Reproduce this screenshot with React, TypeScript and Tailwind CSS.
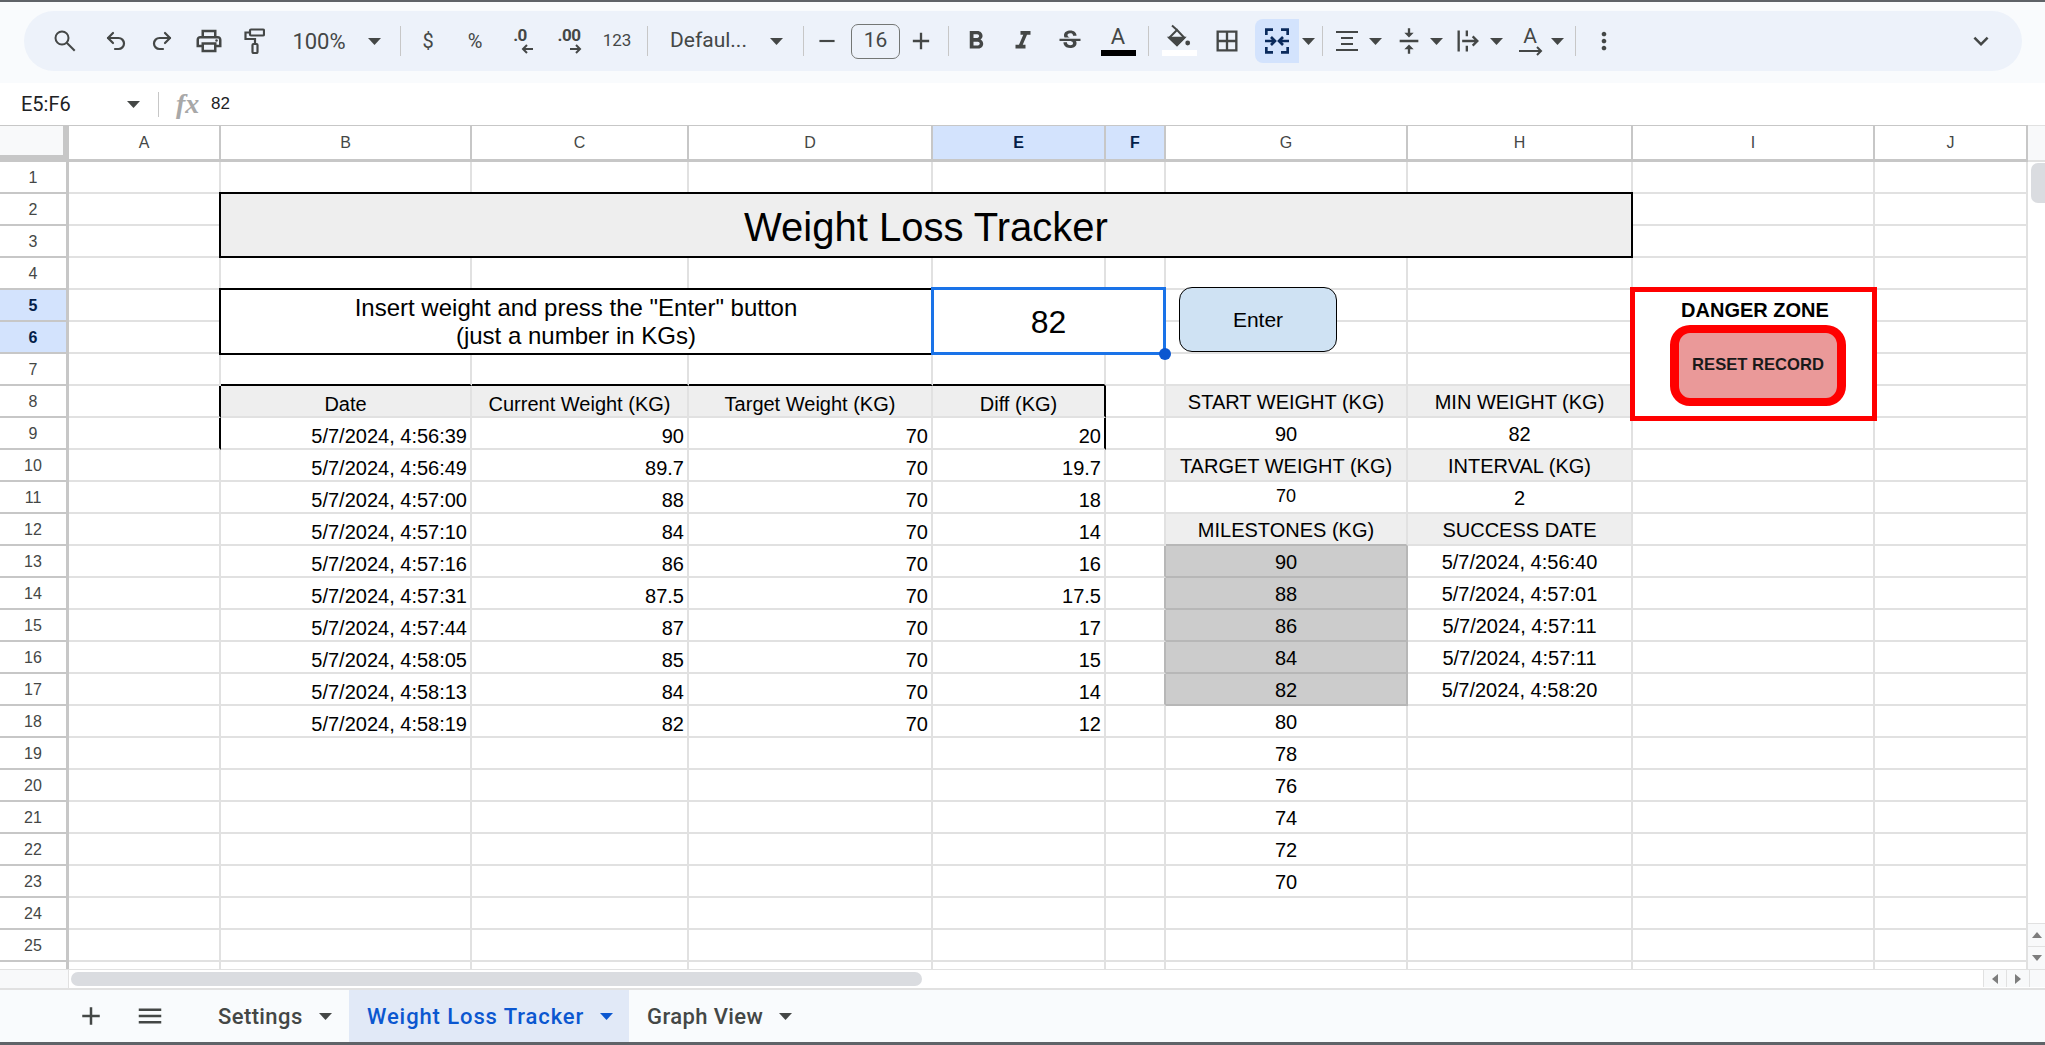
import type { ReactNode } from 'react';
import { Undo2, Redo2 } from 'lucide-react';
import {
  MdOutlinePrint,
  MdFormatBold,
  MdFormatItalic,
  MdStrikethroughS,
  MdOutlineBorderAll,
  MdVerticalAlignCenter,
  MdMoreVert,
  MdKeyboardArrowDown,
  MdAdd,
  MdRemove,
  MdMenu,
} from 'react-icons/md';
import { twMerge } from 'tailwind-merge';

const COLS = ['A', 'B', 'C', 'D', 'E', 'F', 'G', 'H', 'I', 'J'];

const log = [
  ['5/7/2024, 4:56:39', '90', '70', '20'],
  ['5/7/2024, 4:56:49', '89.7', '70', '19.7'],
  ['5/7/2024, 4:57:00', '88', '70', '18'],
  ['5/7/2024, 4:57:10', '84', '70', '14'],
  ['5/7/2024, 4:57:16', '86', '70', '16'],
  ['5/7/2024, 4:57:31', '87.5', '70', '17.5'],
  ['5/7/2024, 4:57:44', '87', '70', '17'],
  ['5/7/2024, 4:58:05', '85', '70', '15'],
  ['5/7/2024, 4:58:13', '84', '70', '14'],
  ['5/7/2024, 4:58:19', '82', '70', '12'],
];

const milestones = ['90', '88', '86', '84', '82', '80', '78', '76', '74', '72', '70'];
const successDates = [
  '5/7/2024, 4:56:40',
  '5/7/2024, 4:57:01',
  '5/7/2024, 4:57:11',
  '5/7/2024, 4:57:11',
  '5/7/2024, 4:58:20',
];

type CellDef = { text?: ReactNode; cls?: string };

const HEAD = 'justify-center bg-[#eeeeee]';
const RIGHT = 'justify-end pr-[3px]';
const MID = 'justify-center pb-[2px]';

const cells: Record<string, CellDef> = {
  B2: {
    text: 'Weight Loss Tracker',
    cls: 'col-span-7 row-span-2 relative z-10 -ml-[2px] -mt-[2px] items-center justify-center border-2 border-black bg-[#eeeeee] pt-[3px] text-[40px] leading-[48px]',
  },
  B5: {
    text: (
      <span className="text-center">
        Insert weight and press the "Enter" button
        <br />
        (just a number in KGs)
      </span>
    ),
    cls: 'col-span-3 row-span-2 relative z-10 -ml-[2px] -mt-[2px] -mb-[1px] items-center justify-center border-2 border-black text-[24px] leading-[28px]',
  },
  E5: {
    text: '82',
    cls: 'col-span-2 row-span-2 relative z-20 -ml-[2px] -mt-[3px] -mb-[1px] items-center justify-center border-x-[3px] border-y-[3px] border-[#1a73e8] pt-[2px] text-[32px] leading-[38px]',
  },
  A8: { cls: 'border-r-black' },
  A9: { cls: 'border-r-black' },
  B7: { cls: 'border-b-black' },
  C7: { cls: 'border-b-black' },
  D7: { cls: 'border-b-black' },
  E7: { cls: 'border-b-black' },
  B8: { text: 'Date', cls: HEAD },
  C8: { text: 'Current Weight (KG)', cls: HEAD },
  D8: { text: 'Target Weight (KG)', cls: HEAD },
  E8: { text: 'Diff (KG)', cls: `${HEAD} border-r-black` },
  G8: { text: 'START WEIGHT (KG)', cls: `${HEAD} pb-[2px]` },
  H8: { text: 'MIN WEIGHT (KG)', cls: `${HEAD} pb-[2px]` },
  G9: { text: '90', cls: MID },
  H9: { text: '82', cls: MID },
  G10: { text: 'TARGET WEIGHT (KG)', cls: `${HEAD} pb-[2px]` },
  H10: { text: 'INTERVAL (KG)', cls: `${HEAD} pb-[2px]` },
  G11: { text: '70', cls: `${MID} text-[18px]` },
  H11: { text: '2', cls: MID },
  G12: { text: 'MILESTONES (KG)', cls: `${HEAD} pb-[2px] border-b-[#b7b7b7]` },
  H12: { text: 'SUCCESS DATE', cls: `${HEAD} pb-[2px]` },
};

log.forEach((row, i) => {
  const r = 9 + i;
  cells[`B${r}`] = { text: row[0], cls: RIGHT };
  cells[`C${r}`] = { text: row[1], cls: RIGHT };
  cells[`D${r}`] = { text: row[2], cls: RIGHT };
  cells[`E${r}`] = { text: row[3], cls: r === 9 ? `${RIGHT} border-r-black` : RIGHT };
});

milestones.forEach((m, i) => {
  const r = 13 + i;
  cells[`G${r}`] = {
    text: m,
    cls: i < 5 ? `${MID} bg-[#cccccc] border-[#b7b7b7]` : MID,
  };
  if (i < 5) cells[`F${r}`] = { cls: 'border-r-[#b7b7b7]' };
});

successDates.forEach((d, i) => {
  cells[`H${13 + i}`] = { text: d, cls: MID };
});

// covered by a merged cell, so no grid item for them
const merged = new Set([
  'C2', 'D2', 'E2', 'F2', 'G2', 'H2',
  'B3', 'C3', 'D3', 'E3', 'F3', 'G3', 'H3',
  'C5', 'D5', 'F5',
  'B6', 'C6', 'D6', 'E6', 'F6',
]);

const Caret = ({ color = '#444746' }: { color?: string }) => (
  <svg width="13" height="7" viewBox="0 0 13 7">
    <polygon points="0,0 13,0 6.5,7" fill={color} />
  </svg>
);

const Sep = ({ className }: { className: string }) => (
  <div className={twMerge('h-[30px] w-px shrink-0 bg-[#c7c7c7]', className)} />
);

const Tool = ({ className, children }: { className?: string; children?: ReactNode }) => (
  <div className={twMerge('flex h-[40px] w-[36px] shrink-0 items-center justify-center text-[#444746]', className)}>
    {children}
  </div>
);

const DropArrow = ({ className }: { className?: string }) => (
  <Tool className={twMerge('w-[20px]', className)}>
    <Caret />
  </Tool>
);

const Decimal = ({ label, dir, className }: { label: string; dir: 'l' | 'r'; className: string }) => (
  <Tool className={twMerge('flex-col items-center', className)}>
    <span className="text-[17px] font-bold leading-[15px] tracking-[-0.5px]">{label}</span>
    <svg width="12" height="10" viewBox="0 0 12 10" className="ml-[14px] mt-[1px]" fill="none" stroke="#444746" strokeWidth="2">
      {dir === 'l' ? <path d="M12 5H2M6 1L2 5l4 4" /> : <path d="M0 5h10M6 1l4 4-4 4" />}
    </svg>
  </Tool>
);

const Toolbar = () => (
  <div className="h-[81px] shrink-0 bg-[#f9fbfd] pt-[9px]">
    <div className="ml-[24px] flex h-[60px] w-[1998px] items-center rounded-[30px] bg-[#edf2fa] pl-[21px] font-['Roboto',sans-serif]">
      <Tool className="w-[40px]">
        <svg width="22" height="22" viewBox="0 0 22 22" fill="none" stroke="#444746" strokeWidth="2">
          <circle cx="8" cy="8" r="6.5" />
          <path d="M12.7 12.7l8 8" />
        </svg>
      </Tool>
      <Tool className="ml-[11px] w-[40px]"><Undo2 size={24} strokeWidth={2.2} /></Tool>
      <Tool className="ml-[6px] w-[40px]"><Redo2 size={24} strokeWidth={2.2} /></Tool>
      <Tool className="ml-[7px] w-[40px]"><MdOutlinePrint size={30} /></Tool>
      <Tool className="ml-[5px] w-[40px]">
        <svg width="21" height="26" viewBox="0 0 21 26" fill="none" stroke="#444746" strokeWidth="2.2">
          <rect x="6" y="1.5" width="14" height="6" rx="1" />
          <path d="M6 4.5H1.5V11H11v5" />
          <rect x="8.5" y="16" width="5" height="9" rx="1" />
        </svg>
      </Tool>
      <Tool className="ml-[18px] w-[54px] text-[22px]">100%</Tool>
      <DropArrow className="ml-[18px]" />
      <Sep className="ml-[16px]" />
      <Tool className="ml-[12px] w-[30px] text-[20px]">$</Tool>
      <Tool className="ml-[17px] w-[30px] text-[20px]">%</Tool>
      <Decimal label=".0" dir="l" className="ml-[12px]" />
      <Decimal label=".00" dir="r" className="ml-[11px] w-[40px]" />
      <Tool className="ml-[13px] w-[30px] text-[17px]">123</Tool>
      <Sep className="ml-[15px]" />
      <Tool className="ml-[22px] w-[79px] justify-start text-[21px]">Defaul...</Tool>
      <DropArrow className="ml-[17px]" />
      <Sep className="ml-[17px]" />
      <Tool className="ml-[8px] w-[30px]"><MdRemove size={26} /></Tool>
      <div className="ml-[9px] flex h-[35px] w-[49px] items-center justify-center rounded-[7px] border border-[#747775] text-[21px] text-[#444746]">16</div>
      <Tool className="ml-[6px] w-[30px]"><MdAdd size={28} /></Tool>
      <Sep className="ml-[12px]" />
      <Tool className="ml-[9px]"><MdFormatBold size={30} /></Tool>
      <Tool className="ml-[11px]"><MdFormatItalic size={30} /></Tool>
      <Tool className="ml-[11px]"><MdStrikethroughS size={28} /></Tool>
      <Tool className="ml-[12px] flex-col justify-start">
        <span className="mt-[3px] text-[22px] leading-[26px]">A</span>
        <div className="h-[6px] w-[35px] bg-black" />
      </Tool>
      <Sep className="ml-[12px]" />
      <Tool className="ml-[12px] flex-col justify-start">
        <svg width="26" height="24" viewBox="0 0 26 24" className="mt-[3px] mb-[2px]" fill="none" stroke="#444746" strokeWidth="2">
          <path d="M6 1.5L11 6" />
          <path d="M11 6l7.3 7.7L11 21l-7.7-7.3z" />
          <path d="M3.3 13.7h15L11 21z" fill="#444746" />
          <circle cx="21.7" cy="19" r="2.4" fill="#444746" stroke="none" />
        </svg>
        <div className="h-[6px] w-[35px] bg-white" />
      </Tool>
      <Tool className="ml-[12px]"><MdOutlineBorderAll size={28} /></Tool>
      <div className="ml-[10px] flex h-[44px] w-[44px] shrink-0 items-center justify-center rounded-l-[8px] bg-[#d3e3fd]">
        <svg width="32" height="32" viewBox="0 0 24 24" fill="none" stroke="#0a2a5c" strokeWidth="2">
          <path d="M9 3.5H4v4M4 16.5v4h5M15 3.5h5v4M20 16.5v4h-5" />
          <path d="M3 12h7M7.5 9l3 3-3 3M21 12h-7M16.5 9l-3 3 3 3" />
        </svg>
      </div>
      <DropArrow className="w-[18px]" />
      <Sep className="ml-[5px]" />
      <Tool className="ml-[6px]">
        <svg width="24" height="24" viewBox="0 0 24 24" fill="none" stroke="#444746" strokeWidth="2">
          <path d="M1 3h22M6 9h12M6 15h12M1 21h22" />
        </svg>
      </Tool>
      <DropArrow />
      <Tool className="ml-[6px]"><MdVerticalAlignCenter size={28} /></Tool>
      <DropArrow className="w-[18px]" />
      <Tool className="ml-[5px]">
        <svg width="28" height="28" viewBox="0 0 24 24" fill="none" stroke="#444746" strokeWidth="2">
          <path d="M4 3v18M11 3v5M11 16v5M7 12h13M16 8l4 4-4 4" />
        </svg>
      </Tool>
      <DropArrow />
      <Tool className="ml-[6px] flex-col">
        <span className="text-[21px] leading-[20px]">A</span>
        <svg width="26" height="10" viewBox="0 0 26 10" fill="none" stroke="#444746" strokeWidth="2">
          <path d="M2 5h22M20 1l4 4-4 4" />
        </svg>
      </Tool>
      <DropArrow className="w-[18px]" />
      <Sep className="ml-[9px]" />
      <Tool className="ml-[13px] w-[30px]"><MdMoreVert size={28} /></Tool>
      <Tool className="ml-auto mr-[26px] w-[30px]"><MdKeyboardArrowDown size={32} /></Tool>
    </div>
  </div>
);

const FormulaBar = () => (
  <div className="flex h-[42px] shrink-0 items-center bg-white font-['Roboto',sans-serif]">
    <span className="ml-[21px] w-[106px] text-[20px] text-[#202124]">E5:F6</span>
    <Caret />
    <div className="ml-[18px] h-[25px] w-px bg-[#c7c7c7]" />
    <span className="ml-[17px] w-[35px] font-['Liberation_Serif',serif] text-[28px] font-bold italic leading-none text-[#a8a8a8]">fx</span>
    <span className="text-[17px] font-['Liberation_Sans',sans-serif] text-[#202124]">82</span>
  </div>
);

const HeaderRow = () => (
  <>
    <div className="border-b-[7px] border-r-[6px] border-t border-[#c7c7c7] bg-[#f8f9fa]" />
    {COLS.map((c) => (
      <div
        key={c}
        className={twMerge(
          'flex items-center justify-center border-b-[3px] border-r-2 border-t border-[#c7c7c7] bg-white text-[16px] text-[#444746]',
          (c === 'E' || c === 'F') && 'bg-[#d3e3fd] font-bold text-[#041e49]'
        )}
      >
        {c}
      </div>
    ))}
  </>
);

const Grid = () => {
  const rows = Array.from({ length: 26 }, (_, i) => i + 1);
  return (
    <div className="grid w-[2028px] shrink-0 grid-cols-[69px_152px_251px_217px_244px_173px_60px_242px_225px_242px_153px] grid-rows-[37px_repeat(25,32px)_7px] overflow-hidden font-['Liberation_Sans',sans-serif] text-black">
      <HeaderRow />
      {rows.flatMap((r) => [
        <div
          key={`h${r}`}
          className={twMerge(
            'flex items-center justify-center border-b-2 border-r-[3px] border-[#c7c7c7] bg-white pt-[2px] text-[16px] text-[#444746]',
            (r === 5 || r === 6) && 'bg-[#d3e3fd] font-bold text-[#041e49]',
            r === 26 && 'border-b-0 pt-0'
          )}
        >
          {r < 26 ? r : ''}
        </div>,
        ...COLS.filter((c) => !merged.has(`${c}${r}`)).map((c) => {
          const id = `${c}${r}`;
          const def = cells[id];
          return (
            <div
              key={id}
              className={twMerge(
                'flex items-end whitespace-nowrap border-b-2 border-r-2 border-[#e1e1e1] bg-white text-[20px] leading-[24px]',
                r === 26 && 'border-b-0',
                def?.cls
              )}
            >
              {def?.text}
              {id === 'E5' && (
                <div className="absolute -bottom-[8px] -right-[8px] h-[12px] w-[12px] rounded-full bg-[#0b57d0]" />
              )}
            </div>
          );
        }),
      ])}
    </div>
  );
};

const VScroll = () => (
  <div className="flex flex-1 flex-col">
    <div className="h-[37px] border-b-2 border-t border-[#e1e1e1] bg-[#f8f9fa]" />
    <div className="flex-1 pl-[3px] pt-[1px]">
      <div className="h-[40px] w-[14px] rounded-l-[7px] bg-[#dadce0]" />
    </div>
    <div className="flex h-[23px] items-center justify-center border-t border-[#e1e1e1] bg-[#f8f9fa]">
      <svg width="10" height="6" viewBox="0 0 10 6"><polygon points="0,6 10,6 5,0" fill="#7d7d7d" /></svg>
    </div>
    <div className="flex h-[23px] items-center justify-center border-t border-[#e1e1e1] bg-[#f8f9fa]">
      <svg width="10" height="6" viewBox="0 0 10 6"><polygon points="0,0 10,0 5,6" fill="#7d7d7d" /></svg>
    </div>
  </div>
);

const HScroll = () => (
  <div className="flex h-[19px] shrink-0 border-t border-[#e1e1e1] bg-white">
    <div className="w-[69px] border-r border-[#e1e1e1] bg-[#f8f9fa]" />
    <div className="ml-[2px] mt-[2px] h-[14px] w-[851px] rounded-[7px] bg-[#dadce0]" />
    <div className="ml-auto flex h-[17px] w-[23px] items-center justify-center border-l border-[#e1e1e1] bg-[#f8f9fa]">
      <svg width="6" height="10" viewBox="0 0 6 10"><polygon points="6,0 6,10 0,5" fill="#7d7d7d" /></svg>
    </div>
    <div className="flex h-[17px] w-[23px] items-center justify-center border-l border-[#e1e1e1] bg-[#f8f9fa]">
      <svg width="6" height="10" viewBox="0 0 6 10"><polygon points="0,0 0,10 6,5" fill="#7d7d7d" /></svg>
    </div>
    <div className="h-[17px] w-[16px] border-l border-[#e1e1e1] bg-[#f8f9fa]" />
  </div>
);

const Tab = ({ label, active, className }: { label: string; active?: boolean; className?: string }) => (
  <div
    className={twMerge(
      "flex h-full items-center font-['Roboto',sans-serif] text-[22px] font-medium tracking-[0.4px] text-[#444746]",
      active && 'bg-[#e1e9f7] tracking-[0.9px] text-[#0b57d0]',
      className
    )}
  >
    <span>{label}</span>
    <span className="ml-[16px]">
      <Caret color={active ? '#0b57d0' : '#444746'} />
    </span>
  </div>
);

const SheetTabs = () => (
  <div className="flex h-[54px] shrink-0 items-center border-t-2 border-[#e1e1e1] bg-[#f9fbfd] text-[#444746]">
    <MdAdd size={30} className="ml-[76px]" />
    <MdMenu size={30} className="ml-[29px]" />
    <Tab label="Settings" className="ml-[53px] w-[131px]" />
    <Tab label="Weight Loss Tracker" active className="w-[280px] pl-[18px]" />
    <Tab label="Graph View" className="pl-[18px]" />
  </div>
);

// floating drawings on the sheet
const EnterButton = () => (
  <div className="absolute left-[1179px] top-[162px] z-30 flex h-[65px] w-[158px] items-center justify-center rounded-[13px] border border-black bg-[#cfe2f3] font-['Liberation_Sans',sans-serif] text-[21px] text-black">
    Enter
  </div>
);

const DangerZone = () => (
  <div className="absolute left-[1630px] top-[162px] z-30 flex h-[134px] w-[247px] flex-col items-center border-[5px] border-[#ff0000] bg-white font-['Liberation_Sans',sans-serif] text-black">
    <div className="ml-[3px] mt-[6px] text-[20px] font-bold leading-[24px]">DANGER ZONE</div>
    <div className="ml-[9px] mt-[3px] flex h-[81px] w-[176px] shrink-0 items-center justify-center rounded-[20px] border-[9px] border-y-[8px] border-[#ff0000] bg-[#ea9999] text-[16.6px] font-bold text-[#1a1a1a]">
      RESET RECORD
    </div>
  </div>
);

export default function App() {
  return (
    <div className="flex h-[1045px] w-[2045px] flex-col overflow-hidden bg-white">
      <div className="h-[2px] shrink-0 bg-[#5f6368]" />
      <Toolbar />
      <FormulaBar />
      <div className="relative flex h-[844px] shrink-0">
        <Grid />
        <VScroll />
        <EnterButton />
        <DangerZone />
      </div>
      <HScroll />
      <SheetTabs />
      <div className="h-[3px] shrink-0 bg-[#5f6368]" />
    </div>
  );
}
